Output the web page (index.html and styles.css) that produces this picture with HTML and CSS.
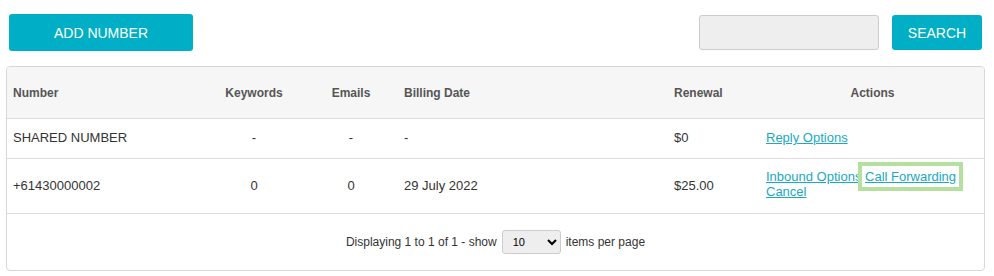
FILE: index.html
```html
<!DOCTYPE html>
<html lang="en">
<head>
    <meta charset="UTF-8" />
    <title>Numbers</title>
    <link rel="stylesheet" href="styles.css">
</head>
<body>
    <div id="page">
        <div id="toolbar">
            <button class="btn btn-add">ADD NUMBER</button>
            <div class="search">
                <input type="text" class="search-input" />
                <button class="btn btn-search">SEARCH</button>
            </div>
        </div>

        <div class="panel">
            <table class="numbers">
                <colgroup>
                    <col class="c-number"><col class="c-keywords"><col class="c-emails">
                    <col class="c-billing"><col class="c-renewal"><col class="c-actions">
                </colgroup>
                <thead>
                    <tr>
                        <th>Number</th>
                        <th class="centre">Keywords</th>
                        <th class="centre">Emails</th>
                        <th>Billing Date</th>
                        <th>Renewal</th>
                        <th class="centre">Actions</th>
                    </tr>
                </thead>
                <tbody>
                    <tr class="row-short">
                        <td>SHARED NUMBER</td>
                        <td class="centre">-</td>
                        <td class="centre">-</td>
                        <td>-</td>
                        <td>$0</td>
                        <td><a href="#">Reply Options</a></td>
                    </tr>
                    <tr class="row-tall">
                        <td>+61430000002</td>
                        <td class="centre">0</td>
                        <td class="centre">0</td>
                        <td>29 July 2022</td>
                        <td>$25.00</td>
                        <td><a href="#">Inbound Options</a> <a href="#" class="hl">Call Forwarding</a><br><a href="#">Cancel</a></td>
                    </tr>
                </tbody>
            </table>
            <div class="pager">
                Displaying 1 to 1 of 1 - show
                <select class="per-page">
                    <option>10</option>
                    <option>25</option>
                    <option>50</option>
                </select>
                items per page
            </div>
        </div>
    </div>
</body>
</html>
```

FILE: styles.css
```css
* { box-sizing: border-box; }
body {
    margin: 0;
    font-family: "Liberation Sans", Arial, sans-serif;
    font-size: 13px;
    color: #333;
    background: #fff;
}
#page {
    padding: 14px 9px 0 6px;
}

/* top bar */
#toolbar {
    display: flex;
    justify-content: space-between;
    align-items: flex-start;
    padding: 0 3px;
    margin-bottom: 15px;
}
.btn {
    border: 0;
    border-radius: 3px;
    background: #00afc6;
    color: #fff;
    font-family: inherit;
    font-size: 14px;
    text-transform: uppercase;
    cursor: pointer;
}
.btn-add {
    width: 184px;
    height: 37px;
}
.search {
    display: flex;
    gap: 13px;
    padding-top: 1px;
}
.search-input {
    width: 180px;
    height: 35px;
    background: #eee;
    border: 1px solid #ccc;
    border-radius: 3px;
}
.btn-search {
    width: 90px;
    height: 35px;
}

/* table */
.panel {
    border: 1px solid #d6d6dd;
    border-radius: 4px;
    overflow: hidden;
}
.numbers {
    width: 100%;
    border-collapse: collapse;
    table-layout: fixed;
}
.c-number { width: 197px; }
.c-keywords { width: 100px; }
.c-emails { width: 94px; }
.c-billing { width: 270px; }
.c-renewal { width: 92px; }
.c-actions { width: 225px; }

.numbers th,
.numbers td {
    padding: 0 6px;
    text-align: left;
    vertical-align: middle;
    border-bottom: 1px solid #dcdce2;
}
.numbers th {
    height: 51px;
    padding-top: 2px;
    background: #f6f6f6;
    color: #555;
    font-size: 12px;
    font-weight: bold;
}
.numbers .centre { text-align: center; }
.row-short td { height: 40px; padding-bottom: 1px; }
.row-tall td { height: 55px; line-height: 15px; }
.row-tall td:last-child { padding-bottom: 3px; }

.numbers a {
    color: #19a9c4;
    text-decoration: underline;
}
.numbers a.hl {
    background: #fff;
    box-shadow: 0 0 0 3px #fff, 0 0 0 7px #b6e09f;
}

/* pager */
.pager {
    height: 56px;
    display: flex;
    justify-content: center;
    align-items: center;
    gap: 5px;
    font-size: 12px;
}
.per-page {
    width: 59px;
    height: 24px;
    font-family: inherit;
    font-size: 11px;
    background: #eee;
    border: 1px solid #ccc;
    border-radius: 3px;
    padding-left: 6px;
}
```
